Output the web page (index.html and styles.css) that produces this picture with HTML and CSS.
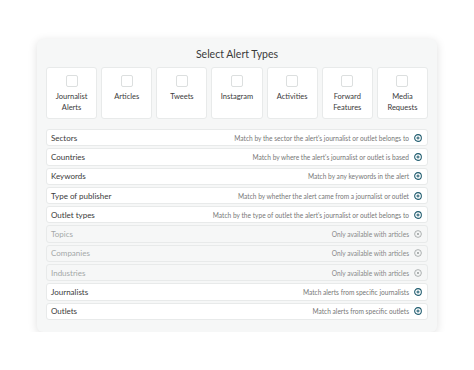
FILE: index.html
```html
<!DOCTYPE html>
<html lang="en">
<head>
  <meta charset="UTF-8" />
  <title>Select Alert Types</title>
  <link rel="stylesheet" href="styles.css">
</head>
<body>
  <div class="panel">
    <div class="title">Select Alert Types</div>
    <div class="types">
      <div class="type"><span class="box"></span><span class="name">Journalist<br>Alerts</span></div>
      <div class="type"><span class="box"></span><span class="name">Articles</span></div>
      <div class="type"><span class="box"></span><span class="name">Tweets</span></div>
      <div class="type"><span class="box"></span><span class="name">Instagram</span></div>
      <div class="type"><span class="box"></span><span class="name">Activities</span></div>
      <div class="type"><span class="box"></span><span class="name">Forward<br>Features</span></div>
      <div class="type"><span class="box"></span><span class="name">Media<br>Requests</span></div>
    </div>
    <div class="rows">
      <div class="row"><span class="label">Sectors</span><span class="desc">Match by the sector the alert's journalist or outlet belongs to</span><svg class="ic" viewBox="0 0 10 10"><circle cx="5" cy="5" r="4.2"/><path d="M5 3v4M3 5h4"/></svg></div>
      <div class="row"><span class="label">Countries</span><span class="desc">Match by where the alert's journalist or outlet is based</span><svg class="ic" viewBox="0 0 10 10"><circle cx="5" cy="5" r="4.2"/><path d="M5 3v4M3 5h4"/></svg></div>
      <div class="row"><span class="label">Keywords</span><span class="desc">Match by any keywords in the alert</span><svg class="ic" viewBox="0 0 10 10"><circle cx="5" cy="5" r="4.2"/><path d="M5 3v4M3 5h4"/></svg></div>
      <div class="row"><span class="label">Type of publisher</span><span class="desc">Match by whether the alert came from a journalist or outlet</span><svg class="ic" viewBox="0 0 10 10"><circle cx="5" cy="5" r="4.2"/><path d="M5 3v4M3 5h4"/></svg></div>
      <div class="row"><span class="label">Outlet types</span><span class="desc">Match by the type of outlet the alert's journalist or outlet belongs to</span><svg class="ic" viewBox="0 0 10 10"><circle cx="5" cy="5" r="4.2"/><path d="M5 3v4M3 5h4"/></svg></div>
      <div class="row off"><span class="label">Topics</span><span class="desc">Only available with articles</span><svg class="ic" viewBox="0 0 10 10"><circle cx="5" cy="5" r="4.2"/><path d="M3.6 3.6l2.8 2.8M6.4 3.6l-2.8 2.8"/></svg></div>
      <div class="row off"><span class="label">Companies</span><span class="desc">Only available with articles</span><svg class="ic" viewBox="0 0 10 10"><circle cx="5" cy="5" r="4.2"/><path d="M3.6 3.6l2.8 2.8M6.4 3.6l-2.8 2.8"/></svg></div>
      <div class="row off"><span class="label">Industries</span><span class="desc">Only available with articles</span><svg class="ic" viewBox="0 0 10 10"><circle cx="5" cy="5" r="4.2"/><path d="M3.6 3.6l2.8 2.8M6.4 3.6l-2.8 2.8"/></svg></div>
      <div class="row"><span class="label">Journalists</span><span class="desc">Match alerts from specific journalists</span><svg class="ic" viewBox="0 0 10 10"><circle cx="5" cy="5" r="4.2"/><path d="M5 3v4M3 5h4"/></svg></div>
      <div class="row"><span class="label">Outlets</span><span class="desc">Match alerts from specific outlets</span><svg class="ic" viewBox="0 0 10 10"><circle cx="5" cy="5" r="4.2"/><path d="M5 3v4M3 5h4"/></svg></div>
    </div>
  </div>
</body>
</html>
```
FILE: styles.css
```css
:root {
  --panel-bg: #f6f7f7; --card-bg: #fff; --border: #e8eaea;
  --text: #3a3a3a; --text-muted: #777; --text-off: #a4a8a8;
  --accent: #1e5b6e; --radius: 5px;
}
body {
  margin: 0; padding: 39px 0 0 37px;
  font-family: Lato, "Noto Sans", sans-serif;
  background: #fff;
}
.panel {
  width: 382px; padding: 9px 9px 12px;
  background: var(--panel-bg);
  border-radius: 6px;
  box-shadow: 0 2px 10px rgba(0,0,0,0.13);
}
.title {
  text-align: center; font-size: 10.5px; color: var(--text);
  margin-bottom: 7px;
}
.types {
  display: grid;
  grid-template-columns: repeat(7, 1fr);
  gap: 4px;
}
.type {
  height: 52px; background: var(--card-bg);
  border: 1px solid var(--border); border-radius: 3px;
  box-sizing: border-box;
  display: flex; flex-direction: column; align-items: center;
  padding-top: 7px;
}
.box {
  width: 10px; height: 10px; border: 1px solid #dcdfdf;
  border-radius: 2px; margin-bottom: 4px;
}
.name {
  font-size: 7.5px; line-height: 11px; color: var(--text);
  text-align: center;
}
.rows {
  margin-top: 10px;
  display: flex; flex-direction: column; gap: 2px;
}
.row {
  height: 17.3px; box-sizing: border-box;
  background: var(--card-bg);
  border: 1px solid var(--border); border-radius: 3px;
  display: flex; align-items: center;
  padding: 0 5px 0 4px;
}
.label { font-size: 8px; color: var(--text); flex: 1; }
.desc { font-size: 6.6px; color: var(--text-muted); margin-right: 5px; }
.ic {
  width: 8px; height: 8px;
  fill: none; stroke: var(--accent); stroke-width: 1.3;
}
.row.off { background: var(--panel-bg); }
.row.off .label { color: var(--text-off); }
.row.off .desc { color: #888; }
.row.off .ic { stroke: #9aa0a0; stroke-width: 1; }
```
